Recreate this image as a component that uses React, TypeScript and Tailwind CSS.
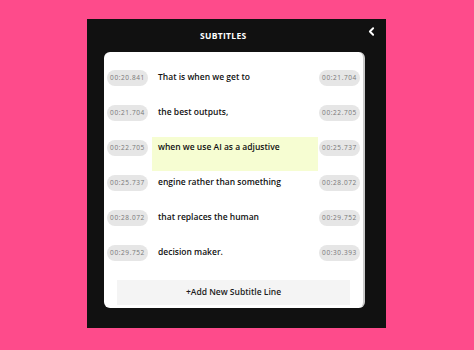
import { ChevronLeft } from 'lucide-react';

const rows = [
  { start: '00:20.841', end: '00:21.704', text: 'That is when we get to' },
  { start: '00:21.704', end: '00:22.705', text: 'the best outputs,' },
  { start: '00:22.705', end: '00:25.737', text: 'when we use AI as a adjustive', active: true },
  { start: '00:25.737', end: '00:28.072', text: 'engine rather than something' },
  { start: '00:28.072', end: '00:29.752', text: 'that replaces the human' },
  { start: '00:29.752', end: '00:30.393', text: 'decision maker.' },
];

function TimePill({ value }: { value: string }) {
  return (
    <div className="flex h-[16px] w-[41px] shrink-0 items-center justify-center whitespace-nowrap rounded-full bg-[#e6e6e6] text-[6.5px] tracking-[0.6px] text-[#777777]">
      {value}
    </div>
  );
}

export default function App() {
  return (
    <div
      className="h-[350px] w-[474px] overflow-hidden bg-[#fe4b8b] pl-[87px] pt-[19px]"
      style={{ fontFamily: '"Open Sans", "Liberation Sans", sans-serif' }}
    >
      <div className="flex h-[309px] w-[299px] flex-col bg-[#111111]">
        <div className="relative flex h-[33px] items-center pl-[113px] pt-[2px]">
          <span className="text-[8.5px] font-bold tracking-[0.3px] text-white">SUBTITLES</span>
          <ChevronLeft className="absolute right-[8px] top-[6px] text-white" size={13} strokeWidth={3.5} />
        </div>
        <div className="ml-[17px] flex h-[256px] w-[261px] flex-col rounded-[6px] border-r-[2px] border-[#c9c9c9] bg-white pt-[8px]">
          {rows.map((r) => (
            <div key={r.start} className="flex h-[35px] items-center pl-[3px] pr-[3px]">
              <TimePill value={r.start} />
              <div className="relative ml-[4px] mr-[1px] flex h-full flex-1 items-center pl-[6px]">
                {r.active && <div className="absolute inset-x-0 top-[7px] h-[34px] bg-[#f6fdd2]" />}
                <span className="relative text-[8.5px] font-semibold text-[#111111]">{r.text}</span>
              </div>
              <TimePill value={r.end} />
            </div>
          ))}
          <div className="mx-[13px] mt-[10px] flex h-[25px] items-center justify-center bg-[#f4f4f4] text-[8.5px] font-semibold text-[#1c1c1c]">
            +Add New Subtitle Line
          </div>
        </div>
      </div>
    </div>
  );
}
